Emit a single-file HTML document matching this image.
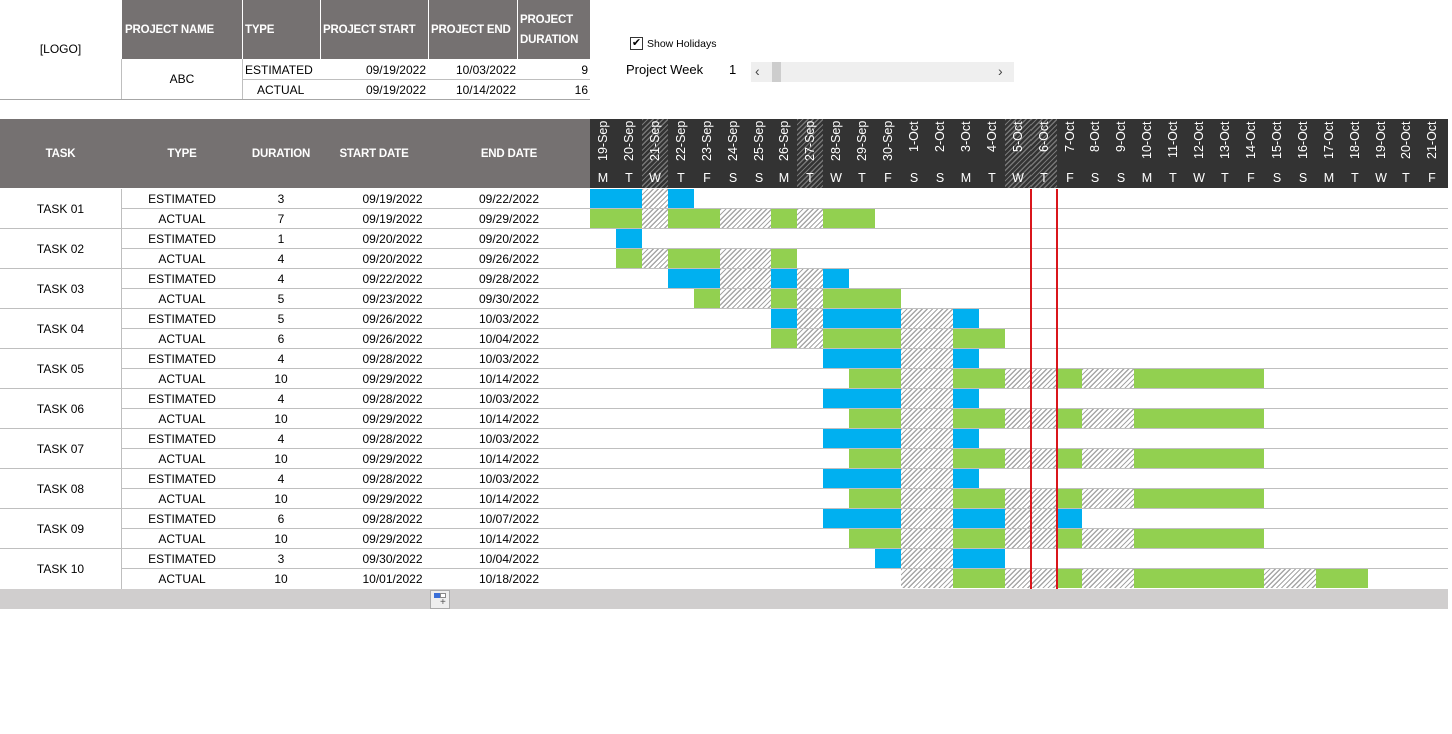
<!DOCTYPE html>
<html><head><meta charset="utf-8"><style>
*{margin:0;padding:0;box-sizing:border-box}
body{width:1452px;height:734px;background:#fff;position:relative;overflow:hidden;font-family:"Liberation Sans",sans-serif;font-size:12px;color:#000}
div{position:absolute}
.hd{background:#757171;color:#fff;font-weight:bold;display:flex;align-items:center;white-space:nowrap;font-size:11.5px;letter-spacing:-0.2px}
.b{background:#00b0f0;height:19px}
.g{background:#92d050;height:19px}
.h{height:19px;background:repeating-linear-gradient(135deg,#a6a6a6 0 1.3px,#fff 1.3px 3.6px)}
.hl{height:1px;background:#bfbfbf}
.t{height:20px;line-height:20px;text-align:center}
.dl{top:119px;width:26px;height:50px;writing-mode:vertical-rl;transform:rotate(180deg);text-align:end;color:#fff;font-size:12.5px;line-height:26px;padding-bottom:2px}
.dn{top:169px;width:26px;height:19px;color:#fff;text-align:center;line-height:19px;font-size:12.5px}
.hh{top:119px;height:69px;width:26px;background:repeating-linear-gradient(135deg,#777 0 1.3px,#333 1.3px 3.6px)}
</style></head><body>
<div style="left:0;top:0;width:121px;height:99px;line-height:99px;text-align:center">[LOGO]</div>
<div class="hd" style="left:122px;top:0;width:120px;height:59px;padding-left:3px">PROJECT NAME</div>
<div class="hd" style="left:243px;top:0;width:77px;height:59px;padding-left:2px">TYPE</div>
<div class="hd" style="left:321px;top:0;width:107px;height:59px;padding-left:2px">PROJECT START</div>
<div class="hd" style="left:429px;top:0;width:88px;height:59px;padding-left:2px">PROJECT END</div>
<div class="hd" style="left:518px;top:0;width:72px;height:59px;padding-left:2px;line-height:20px">PROJECT<br>DURATION</div>
<div style="left:121px;top:59px;width:1px;height:40px;background:#bfbfbf"></div>
<div style="left:242px;top:59px;width:1px;height:40px;background:#bfbfbf"></div>
<div style="left:122px;top:59px;width:120px;height:40px;line-height:40px;text-align:center">ABC</div>
<div style="left:245px;top:60px;height:20px;line-height:20px">ESTIMATED</div>
<div style="left:257px;top:80px;height:20px;line-height:20px">ACTUAL</div>
<div style="left:330px;top:60px;width:96px;line-height:20px;text-align:right">09/19/2022</div>
<div style="left:330px;top:80px;width:96px;line-height:20px;text-align:right">09/19/2022</div>
<div style="left:420px;top:60px;width:96px;line-height:20px;text-align:right">10/03/2022</div>
<div style="left:420px;top:80px;width:96px;line-height:20px;text-align:right">10/14/2022</div>
<div style="left:520px;top:60px;width:68px;line-height:20px;text-align:right">9</div>
<div style="left:520px;top:80px;width:68px;line-height:20px;text-align:right">16</div>
<div class="hl" style="left:242px;top:79px;width:348px"></div>
<div class="hl" style="left:0;top:99px;width:590px;background:#a6a6a6"></div>
<div style="left:630px;top:37px;width:13px;height:13px;border:1px solid #333;font-size:11px;line-height:11px;text-align:center">✔</div>
<div style="left:647px;top:37px;font-size:10.5px;line-height:14px">Show Holidays</div>
<div style="left:626px;top:61px;font-size:13px;line-height:18px">Project Week</div>
<div style="left:729px;top:61px;font-size:13px;line-height:18px">1</div>
<div style="left:751px;top:62px;width:263px;height:20px;background:#efefef"></div>
<div style="left:772px;top:62px;width:9px;height:20px;background:#cdcdcd"></div>
<div style="left:755px;top:61px;font-size:14px;line-height:20px;color:#444">&lsaquo;</div>
<div style="left:998px;top:61px;font-size:14px;line-height:20px;color:#444">&rsaquo;</div>
<div class="hd" style="left:0;top:119px;width:590px;height:69px"></div>
<div class="hd" style="left:0;top:119px;width:121px;height:69px;justify-content:center">TASK</div>
<div class="hd" style="left:122px;top:119px;width:120px;height:69px;justify-content:center">TYPE</div>
<div class="hd" style="left:242px;top:119px;width:78px;height:69px;justify-content:center">DURATION</div>
<div class="hd" style="left:320px;top:119px;width:108px;height:69px;justify-content:center">START DATE</div>
<div class="hd" style="left:428px;top:119px;width:162px;height:69px;justify-content:center">END DATE</div>
<div style="left:590px;top:119px;width:858px;height:69px;background:#333"></div>
<div class="hh" style="left:642px"></div><div class="hh" style="left:797px"></div><div class="hh" style="left:1005px"></div><div class="hh" style="left:1031px"></div>
<div class="dl" style="left:590px">19-Sep</div><div class="dl" style="left:616px">20-Sep</div><div class="dl" style="left:642px">21-Sep</div><div class="dl" style="left:668px">22-Sep</div><div class="dl" style="left:694px">23-Sep</div><div class="dl" style="left:720px">24-Sep</div><div class="dl" style="left:746px">25-Sep</div><div class="dl" style="left:771px">26-Sep</div><div class="dl" style="left:797px">27-Sep</div><div class="dl" style="left:823px">28-Sep</div><div class="dl" style="left:849px">29-Sep</div><div class="dl" style="left:875px">30-Sep</div><div class="dl" style="left:901px">1-Oct</div><div class="dl" style="left:927px">2-Oct</div><div class="dl" style="left:953px">3-Oct</div><div class="dl" style="left:979px">4-Oct</div><div class="dl" style="left:1005px">5-Oct</div><div class="dl" style="left:1031px">6-Oct</div><div class="dl" style="left:1057px">7-Oct</div><div class="dl" style="left:1082px">8-Oct</div><div class="dl" style="left:1108px">9-Oct</div><div class="dl" style="left:1134px">10-Oct</div><div class="dl" style="left:1160px">11-Oct</div><div class="dl" style="left:1186px">12-Oct</div><div class="dl" style="left:1212px">13-Oct</div><div class="dl" style="left:1238px">14-Oct</div><div class="dl" style="left:1264px">15-Oct</div><div class="dl" style="left:1290px">16-Oct</div><div class="dl" style="left:1316px">17-Oct</div><div class="dl" style="left:1342px">18-Oct</div><div class="dl" style="left:1368px">19-Oct</div><div class="dl" style="left:1393px">20-Oct</div><div class="dl" style="left:1419px">21-Oct</div>
<div class="dn" style="left:590px">M</div><div class="dn" style="left:616px">T</div><div class="dn" style="left:642px">W</div><div class="dn" style="left:668px">T</div><div class="dn" style="left:694px">F</div><div class="dn" style="left:720px">S</div><div class="dn" style="left:746px">S</div><div class="dn" style="left:771px">M</div><div class="dn" style="left:797px">T</div><div class="dn" style="left:823px">W</div><div class="dn" style="left:849px">T</div><div class="dn" style="left:875px">F</div><div class="dn" style="left:901px">S</div><div class="dn" style="left:927px">S</div><div class="dn" style="left:953px">M</div><div class="dn" style="left:979px">T</div><div class="dn" style="left:1005px">W</div><div class="dn" style="left:1031px">T</div><div class="dn" style="left:1057px">F</div><div class="dn" style="left:1082px">S</div><div class="dn" style="left:1108px">S</div><div class="dn" style="left:1134px">M</div><div class="dn" style="left:1160px">T</div><div class="dn" style="left:1186px">W</div><div class="dn" style="left:1212px">T</div><div class="dn" style="left:1238px">F</div><div class="dn" style="left:1264px">S</div><div class="dn" style="left:1290px">S</div><div class="dn" style="left:1316px">M</div><div class="dn" style="left:1342px">T</div><div class="dn" style="left:1368px">W</div><div class="dn" style="left:1393px">T</div><div class="dn" style="left:1419px">F</div>
<div class="hl" style="left:122px;top:208px;width:1326px"></div><div class="hl" style="left:0;top:228px;width:1448px"></div>
<div class="hl" style="left:122px;top:248px;width:1326px"></div><div class="hl" style="left:0;top:268px;width:1448px"></div>
<div class="hl" style="left:122px;top:288px;width:1326px"></div><div class="hl" style="left:0;top:308px;width:1448px"></div>
<div class="hl" style="left:122px;top:328px;width:1326px"></div><div class="hl" style="left:0;top:348px;width:1448px"></div>
<div class="hl" style="left:122px;top:368px;width:1326px"></div><div class="hl" style="left:0;top:388px;width:1448px"></div>
<div class="hl" style="left:122px;top:408px;width:1326px"></div><div class="hl" style="left:0;top:428px;width:1448px"></div>
<div class="hl" style="left:122px;top:448px;width:1326px"></div><div class="hl" style="left:0;top:468px;width:1448px"></div>
<div class="hl" style="left:122px;top:488px;width:1326px"></div><div class="hl" style="left:0;top:508px;width:1448px"></div>
<div class="hl" style="left:122px;top:528px;width:1326px"></div><div class="hl" style="left:0;top:548px;width:1448px"></div>
<div class="hl" style="left:122px;top:568px;width:1326px"></div>
<div style="left:121px;top:189px;width:1px;height:400px;background:#bfbfbf"></div>
<div class="t" style="left:0;top:189px;width:121px;height:40px;line-height:40px">TASK 01</div>
<div class="t" style="left:0;top:229px;width:121px;height:40px;line-height:40px">TASK 02</div>
<div class="t" style="left:0;top:269px;width:121px;height:40px;line-height:40px">TASK 03</div>
<div class="t" style="left:0;top:309px;width:121px;height:40px;line-height:40px">TASK 04</div>
<div class="t" style="left:0;top:349px;width:121px;height:40px;line-height:40px">TASK 05</div>
<div class="t" style="left:0;top:389px;width:121px;height:40px;line-height:40px">TASK 06</div>
<div class="t" style="left:0;top:429px;width:121px;height:40px;line-height:40px">TASK 07</div>
<div class="t" style="left:0;top:469px;width:121px;height:40px;line-height:40px">TASK 08</div>
<div class="t" style="left:0;top:509px;width:121px;height:40px;line-height:40px">TASK 09</div>
<div class="t" style="left:0;top:549px;width:121px;height:40px;line-height:40px">TASK 10</div>
<div class="t" style="left:122px;top:189px;width:120px">ESTIMATED</div><div class="t" style="left:242px;top:189px;width:78px">3</div><div class="t" style="left:340px;top:189px;width:105px">09/19/2022</div><div class="t" style="left:455px;top:189px;width:108px">09/22/2022</div>
<div class="t" style="left:122px;top:209px;width:120px">ACTUAL</div><div class="t" style="left:242px;top:209px;width:78px">7</div><div class="t" style="left:340px;top:209px;width:105px">09/19/2022</div><div class="t" style="left:455px;top:209px;width:108px">09/29/2022</div>
<div class="t" style="left:122px;top:229px;width:120px">ESTIMATED</div><div class="t" style="left:242px;top:229px;width:78px">1</div><div class="t" style="left:340px;top:229px;width:105px">09/20/2022</div><div class="t" style="left:455px;top:229px;width:108px">09/20/2022</div>
<div class="t" style="left:122px;top:249px;width:120px">ACTUAL</div><div class="t" style="left:242px;top:249px;width:78px">4</div><div class="t" style="left:340px;top:249px;width:105px">09/20/2022</div><div class="t" style="left:455px;top:249px;width:108px">09/26/2022</div>
<div class="t" style="left:122px;top:269px;width:120px">ESTIMATED</div><div class="t" style="left:242px;top:269px;width:78px">4</div><div class="t" style="left:340px;top:269px;width:105px">09/22/2022</div><div class="t" style="left:455px;top:269px;width:108px">09/28/2022</div>
<div class="t" style="left:122px;top:289px;width:120px">ACTUAL</div><div class="t" style="left:242px;top:289px;width:78px">5</div><div class="t" style="left:340px;top:289px;width:105px">09/23/2022</div><div class="t" style="left:455px;top:289px;width:108px">09/30/2022</div>
<div class="t" style="left:122px;top:309px;width:120px">ESTIMATED</div><div class="t" style="left:242px;top:309px;width:78px">5</div><div class="t" style="left:340px;top:309px;width:105px">09/26/2022</div><div class="t" style="left:455px;top:309px;width:108px">10/03/2022</div>
<div class="t" style="left:122px;top:329px;width:120px">ACTUAL</div><div class="t" style="left:242px;top:329px;width:78px">6</div><div class="t" style="left:340px;top:329px;width:105px">09/26/2022</div><div class="t" style="left:455px;top:329px;width:108px">10/04/2022</div>
<div class="t" style="left:122px;top:349px;width:120px">ESTIMATED</div><div class="t" style="left:242px;top:349px;width:78px">4</div><div class="t" style="left:340px;top:349px;width:105px">09/28/2022</div><div class="t" style="left:455px;top:349px;width:108px">10/03/2022</div>
<div class="t" style="left:122px;top:369px;width:120px">ACTUAL</div><div class="t" style="left:242px;top:369px;width:78px">10</div><div class="t" style="left:340px;top:369px;width:105px">09/29/2022</div><div class="t" style="left:455px;top:369px;width:108px">10/14/2022</div>
<div class="t" style="left:122px;top:389px;width:120px">ESTIMATED</div><div class="t" style="left:242px;top:389px;width:78px">4</div><div class="t" style="left:340px;top:389px;width:105px">09/28/2022</div><div class="t" style="left:455px;top:389px;width:108px">10/03/2022</div>
<div class="t" style="left:122px;top:409px;width:120px">ACTUAL</div><div class="t" style="left:242px;top:409px;width:78px">10</div><div class="t" style="left:340px;top:409px;width:105px">09/29/2022</div><div class="t" style="left:455px;top:409px;width:108px">10/14/2022</div>
<div class="t" style="left:122px;top:429px;width:120px">ESTIMATED</div><div class="t" style="left:242px;top:429px;width:78px">4</div><div class="t" style="left:340px;top:429px;width:105px">09/28/2022</div><div class="t" style="left:455px;top:429px;width:108px">10/03/2022</div>
<div class="t" style="left:122px;top:449px;width:120px">ACTUAL</div><div class="t" style="left:242px;top:449px;width:78px">10</div><div class="t" style="left:340px;top:449px;width:105px">09/29/2022</div><div class="t" style="left:455px;top:449px;width:108px">10/14/2022</div>
<div class="t" style="left:122px;top:469px;width:120px">ESTIMATED</div><div class="t" style="left:242px;top:469px;width:78px">4</div><div class="t" style="left:340px;top:469px;width:105px">09/28/2022</div><div class="t" style="left:455px;top:469px;width:108px">10/03/2022</div>
<div class="t" style="left:122px;top:489px;width:120px">ACTUAL</div><div class="t" style="left:242px;top:489px;width:78px">10</div><div class="t" style="left:340px;top:489px;width:105px">09/29/2022</div><div class="t" style="left:455px;top:489px;width:108px">10/14/2022</div>
<div class="t" style="left:122px;top:509px;width:120px">ESTIMATED</div><div class="t" style="left:242px;top:509px;width:78px">6</div><div class="t" style="left:340px;top:509px;width:105px">09/28/2022</div><div class="t" style="left:455px;top:509px;width:108px">10/07/2022</div>
<div class="t" style="left:122px;top:529px;width:120px">ACTUAL</div><div class="t" style="left:242px;top:529px;width:78px">10</div><div class="t" style="left:340px;top:529px;width:105px">09/29/2022</div><div class="t" style="left:455px;top:529px;width:108px">10/14/2022</div>
<div class="t" style="left:122px;top:549px;width:120px">ESTIMATED</div><div class="t" style="left:242px;top:549px;width:78px">3</div><div class="t" style="left:340px;top:549px;width:105px">09/30/2022</div><div class="t" style="left:455px;top:549px;width:108px">10/04/2022</div>
<div class="t" style="left:122px;top:569px;width:120px">ACTUAL</div><div class="t" style="left:242px;top:569px;width:78px">10</div><div class="t" style="left:340px;top:569px;width:105px">10/01/2022</div><div class="t" style="left:455px;top:569px;width:108px">10/18/2022</div>
<div class="b" style="left:590px;top:189px;width:104px"></div><div class="h" style="left:642px;top:189px;width:26px"></div>
<div class="g" style="left:590px;top:209px;width:285px"></div><div class="h" style="left:642px;top:209px;width:26px"></div><div class="h" style="left:720px;top:209px;width:51px"></div><div class="h" style="left:797px;top:209px;width:26px"></div>
<div class="b" style="left:616px;top:229px;width:26px"></div>
<div class="g" style="left:616px;top:249px;width:181px"></div><div class="h" style="left:642px;top:249px;width:26px"></div><div class="h" style="left:720px;top:249px;width:51px"></div>
<div class="b" style="left:668px;top:269px;width:181px"></div><div class="h" style="left:720px;top:269px;width:51px"></div><div class="h" style="left:797px;top:269px;width:26px"></div>
<div class="g" style="left:694px;top:289px;width:207px"></div><div class="h" style="left:720px;top:289px;width:51px"></div><div class="h" style="left:797px;top:289px;width:26px"></div>
<div class="b" style="left:771px;top:309px;width:208px"></div><div class="h" style="left:797px;top:309px;width:26px"></div><div class="h" style="left:901px;top:309px;width:52px"></div>
<div class="g" style="left:771px;top:329px;width:234px"></div><div class="h" style="left:797px;top:329px;width:26px"></div><div class="h" style="left:901px;top:329px;width:52px"></div>
<div class="b" style="left:823px;top:349px;width:156px"></div><div class="h" style="left:901px;top:349px;width:52px"></div>
<div class="g" style="left:849px;top:369px;width:415px"></div><div class="h" style="left:901px;top:369px;width:52px"></div><div class="h" style="left:1005px;top:369px;width:52px"></div><div class="h" style="left:1082px;top:369px;width:52px"></div>
<div class="b" style="left:823px;top:389px;width:156px"></div><div class="h" style="left:901px;top:389px;width:52px"></div>
<div class="g" style="left:849px;top:409px;width:415px"></div><div class="h" style="left:901px;top:409px;width:52px"></div><div class="h" style="left:1005px;top:409px;width:52px"></div><div class="h" style="left:1082px;top:409px;width:52px"></div>
<div class="b" style="left:823px;top:429px;width:156px"></div><div class="h" style="left:901px;top:429px;width:52px"></div>
<div class="g" style="left:849px;top:449px;width:415px"></div><div class="h" style="left:901px;top:449px;width:52px"></div><div class="h" style="left:1005px;top:449px;width:52px"></div><div class="h" style="left:1082px;top:449px;width:52px"></div>
<div class="b" style="left:823px;top:469px;width:156px"></div><div class="h" style="left:901px;top:469px;width:52px"></div>
<div class="g" style="left:849px;top:489px;width:415px"></div><div class="h" style="left:901px;top:489px;width:52px"></div><div class="h" style="left:1005px;top:489px;width:52px"></div><div class="h" style="left:1082px;top:489px;width:52px"></div>
<div class="b" style="left:823px;top:509px;width:259px"></div><div class="h" style="left:901px;top:509px;width:52px"></div><div class="h" style="left:1005px;top:509px;width:52px"></div>
<div class="g" style="left:849px;top:529px;width:415px"></div><div class="h" style="left:901px;top:529px;width:52px"></div><div class="h" style="left:1005px;top:529px;width:52px"></div><div class="h" style="left:1082px;top:529px;width:52px"></div>
<div class="b" style="left:875px;top:549px;width:130px"></div><div class="h" style="left:901px;top:549px;width:52px"></div>
<div class="g" style="left:901px;top:569px;width:467px"></div><div class="h" style="left:901px;top:569px;width:52px"></div><div class="h" style="left:1005px;top:569px;width:52px"></div><div class="h" style="left:1082px;top:569px;width:52px"></div><div class="h" style="left:1264px;top:569px;width:52px"></div>
<div style="left:1030px;top:189px;width:2px;height:400px;background:#d9151b"></div>
<div style="left:1056px;top:189px;width:2px;height:400px;background:#d9151b"></div>
<div style="left:0;top:589px;width:1448px;height:20px;background:#d0cece"></div>
<div style="left:430px;top:590px;width:20px;height:19px;border:1px solid #aaa;background:#eee"></div>
<div style="left:434px;top:593px;width:6px;height:5px;background:#3a6fd8"></div>
<div style="left:440px;top:593px;width:6px;height:5px;border:1px solid #888;background:#fff"></div>
<div style="left:440px;top:598px;font-size:10px;line-height:10px;color:#555">+</div>
</body></html>
